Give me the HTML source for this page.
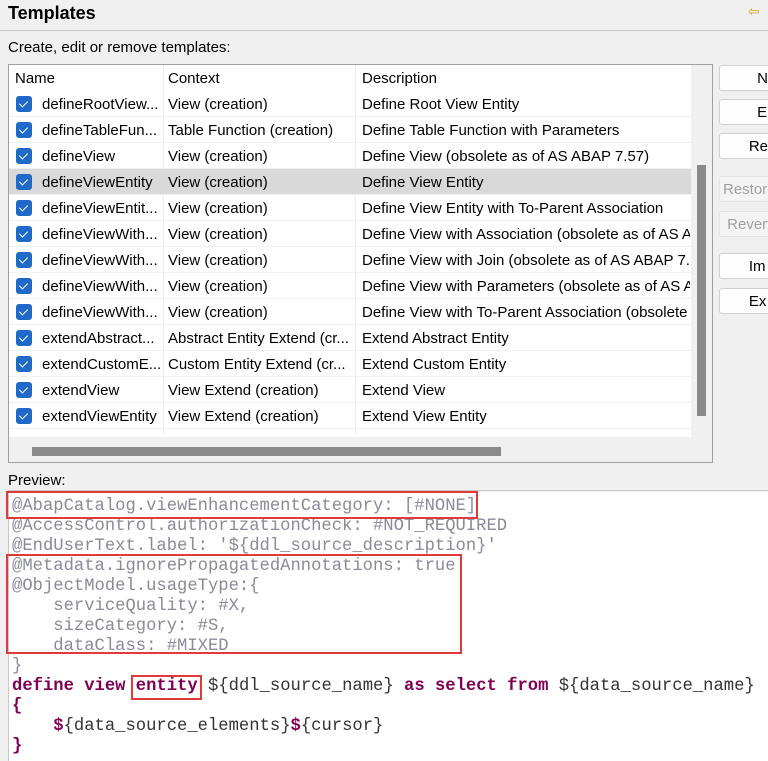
<!DOCTYPE html>
<html><head><style>
body{margin:0;width:768px;height:761px;background:#f0f0f0;font-family:"Liberation Sans",sans-serif;overflow:hidden;position:relative;color:#000}
.abs{position:absolute}
.title{left:8px;top:3px;font-size:18px;font-weight:bold}
.tb{left:0;top:30px;width:768px;height:1px;background:#c8c8c8}
.lbl{font-size:15px}
.table{left:8px;top:64px;width:705px;height:399px;border:1px solid #a0a0a0;background:#fff;box-sizing:border-box;overflow:hidden}
.row{position:absolute;left:0;width:682px;height:26px;border-bottom:1px solid #f0f0f0;box-sizing:border-box;font-size:15px;line-height:28px;white-space:nowrap}
.row span{position:absolute;top:0;overflow:hidden}
.c1{left:33px;width:120px}.c2{left:159px;width:188px}.c3{left:353px;width:328px}
.cb{position:absolute;left:7px;top:5px;width:16px;height:16px;background:#1f6ac9;border-radius:3px}
.cb:after{content:"";position:absolute;left:5px;top:3px;width:4px;height:7px;border:solid #fff;border-width:0 1.5px 1.5px 0;transform:rotate(45deg)}
.vl{position:absolute;top:0;width:1px;height:370px;background:#eee}
.btn{position:absolute;left:719px;width:60px;height:26px;background:#fdfdfd;border:1px solid #d0d0d0;border-radius:3px;font-size:15px;line-height:26px;box-sizing:border-box;padding-left:8px;white-space:nowrap;overflow:hidden}
.dis{color:#a0a0a0;background:#f4f4f4;border-color:#e3e3e3;padding-left:3px}
.code{left:8px;top:492px;width:760px;height:269px;background:#fff;border-left:1px solid #c8c8c8;font-family:"Liberation Mono",monospace;font-size:17.2px;line-height:20px;white-space:pre;color:#8a8a9a;padding:5px 0 0 3px;box-sizing:border-box}
.ct{left:8px;top:490px;width:760px;height:1px;background:#c8c8c8}
.k{color:#7f0055;font-weight:bold}.d{color:#333}
.box{position:absolute;border:2px solid #e03a3a}
</style></head><body>
<div class="abs title">Templates</div>
<div class="abs" style="left:748px;top:3px;color:#e0a020;font-size:14px">⇦</div>
<div class="abs tb"></div>
<div class="abs lbl" style="left:8px;top:39px">Create, edit or remove templates:</div>
<div class="abs table">
 <div class="vl" style="left:154px"></div><div class="vl" style="left:346px"></div>
 <div class="row" style="top:0;border:0"><span class="c1" style="left:6px">Name</span><span class="c2">Context</span><span class="c3">Description</span></div>
 <div class="row" style="top:26px"><i class="cb"></i><span class="c1">defineRootView...</span><span class="c2">View (creation)</span><span class="c3">Define Root View Entity</span></div>
 <div class="row" style="top:52px"><i class="cb"></i><span class="c1">defineTableFun...</span><span class="c2">Table Function (creation)</span><span class="c3">Define Table Function with Parameters</span></div>
 <div class="row" style="top:78px"><i class="cb"></i><span class="c1">defineView</span><span class="c2">View (creation)</span><span class="c3">Define View (obsolete as of AS ABAP 7.57)</span></div>
 <div class="row" style="top:104px;background:#d9d9d9"><i class="cb"></i><span class="c1">defineViewEntity</span><span class="c2">View (creation)</span><span class="c3">Define View Entity</span></div>
 <div class="row" style="top:130px"><i class="cb"></i><span class="c1">defineViewEntit...</span><span class="c2">View (creation)</span><span class="c3">Define View Entity with To-Parent Association</span></div>
 <div class="row" style="top:156px"><i class="cb"></i><span class="c1">defineViewWith...</span><span class="c2">View (creation)</span><span class="c3">Define View with Association (obsolete as of AS ABAP</span></div>
 <div class="row" style="top:182px"><i class="cb"></i><span class="c1">defineViewWith...</span><span class="c2">View (creation)</span><span class="c3">Define View with Join (obsolete as of AS ABAP 7.57)</span></div>
 <div class="row" style="top:208px"><i class="cb"></i><span class="c1">defineViewWith...</span><span class="c2">View (creation)</span><span class="c3">Define View with Parameters (obsolete as of AS ABAP</span></div>
 <div class="row" style="top:234px"><i class="cb"></i><span class="c1">defineViewWith...</span><span class="c2">View (creation)</span><span class="c3">Define View with To-Parent Association (obsolete</span></div>
 <div class="row" style="top:260px"><i class="cb"></i><span class="c1">extendAbstract...</span><span class="c2">Abstract Entity Extend (cr...</span><span class="c3">Extend Abstract Entity</span></div>
 <div class="row" style="top:286px"><i class="cb"></i><span class="c1">extendCustomE...</span><span class="c2">Custom Entity Extend (cr...</span><span class="c3">Extend Custom Entity</span></div>
 <div class="row" style="top:312px"><i class="cb"></i><span class="c1">extendView</span><span class="c2">View Extend (creation)</span><span class="c3">Extend View</span></div>
 <div class="row" style="top:338px"><i class="cb"></i><span class="c1">extendViewEntity</span><span class="c2">View Extend (creation)</span><span class="c3">Extend View Entity</span></div>
 <div style="position:absolute;left:682px;top:0;width:22px;height:372px;background:#f0f0f0"></div>
 <div style="position:absolute;left:688px;top:100px;width:9px;height:251px;background:#8a8a8a"></div>
 <div style="position:absolute;left:0;top:372px;width:704px;height:26px;background:#f0f0f0"></div>
 <div style="position:absolute;left:23px;top:382px;width:469px;height:9px;background:#8a8a8a"></div>
</div>
<div class="btn" style="top:65px">&nbsp;&nbsp;&nbsp;&nbsp;&nbsp;&nbsp;&nbsp;N</div>
<div class="btn" style="top:99px">&nbsp;&nbsp;&nbsp;&nbsp;&nbsp;&nbsp;&nbsp;E</div>
<div class="btn" style="top:133px">&nbsp;&nbsp;&nbsp;&nbsp;&nbsp;Re</div>
<div class="btn dis" style="top:176px">Restore</div>
<div class="btn dis" style="top:211px">&nbsp;Revert</div>
<div class="btn" style="top:253px">&nbsp;&nbsp;&nbsp;&nbsp;&nbsp;Im</div>
<div class="btn" style="top:288px">&nbsp;&nbsp;&nbsp;&nbsp;&nbsp;Ex</div>
<div class="abs lbl" style="left:8px;top:472px">Preview:</div>
<div class="abs ct"></div>
<div class="abs code">@AbapCatalog.viewEnhancementCategory: [#NONE]
@AccessControl.authorizationCheck: #NOT_REQUIRED
@EndUserText.label: '${ddl_source_description}'
@Metadata.ignorePropagatedAnnotations: true
@ObjectModel.usageType:{
    serviceQuality: #X,
    sizeCategory: #S,
    dataClass: #MIXED
}
<span class="k">define view</span> <span class="k">entity</span> <span class="d">${ddl_source_name}</span> <span class="k">as select from</span> <span class="d">${data_source_name}</span>
<span class="k">{</span>
    <span class="k">$</span><span class="d">{data_source_elements}</span><span class="k">$</span><span class="d">{cursor}</span>
<span class="k">}</span></div>
<div class="box" style="left:6px;top:491px;width:468px;height:24px"></div>
<div class="box" style="left:6px;top:554px;width:452px;height:96px"></div>
<div class="box" style="left:131px;top:675px;width:67px;height:21px"></div>
</body></html>
